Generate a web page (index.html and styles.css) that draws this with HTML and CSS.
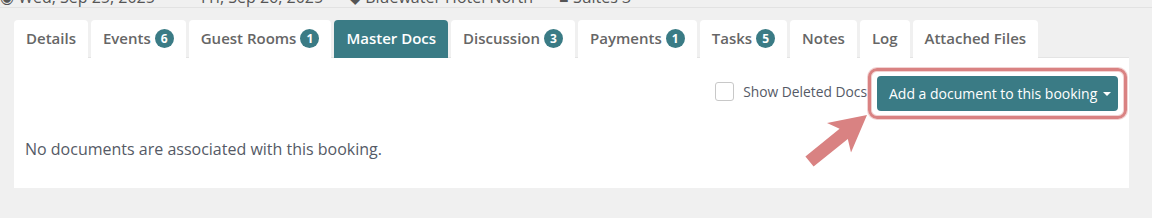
FILE: index.html
```html
<!DOCTYPE html>
<html lang="en">
<head>
<meta charset="utf-8">
<title>Booking – Master Docs</title>
<link rel="stylesheet" href="styles.css">
</head>
<body>
<div class="topbar">
  <div class="topbar-line">
    <span class="tb-item">&#9673; Wed, Sep 25, 2025</span>
    <span class="tb-item">&mdash; Fri, Sep 26, 2025</span>
    <span class="tb-item">&#9670; Bluewater Hotel North</span>
    <span class="tb-item">&#9632; Suites 3</span>
  </div>
</div>
<main class="main">
  <nav class="tabs">
    <a class="tab">Details</a>
    <a class="tab">Events <span class="badge">6</span></a>
    <a class="tab">Guest Rooms <span class="badge">1</span></a>
    <a class="tab active">Master Docs</a>
    <a class="tab">Discussion <span class="badge">3</span></a>
    <a class="tab">Payments <span class="badge">1</span></a>
    <a class="tab">Tasks <span class="badge">5</span></a>
    <a class="tab">Notes</a>
    <a class="tab">Log</a>
    <a class="tab">Attached Files</a>
  </nav>
  <section class="panel">
    <div class="toolbar">
      <label class="check-label"><span class="checkbox"></span>Show Deleted Docs</label>
      <div class="btn-wrap">
        <button class="btn">Add a document to this booking <span class="caret"></span></button>
      </div>
    </div>
    <p class="empty">No documents are associated with this booking.</p>
    <svg class="arrow" width="80" height="70" viewBox="800 110 80 70" aria-hidden="true">
      <polygon points="867,115 851,152.5 847.8,138.9 813.6,166.6 805.4,156.5 839.6,128.8 827,122.9" fill="#d98282"/>
    </svg>
  </section>
</main>
</body>
</html>
```

FILE: styles.css
```css
* { box-sizing: border-box; }
html, body { margin: 0; padding: 0; }
body {
  background: #f0f0f0;
  font-family: "Open Sans", "Liberation Sans", sans-serif;
  color: #555a66;
  width: 1152px;
  height: 218px;
  overflow: hidden;
}
.topbar {
  height: 8px;
  border-bottom: 1px solid #e2e2e2;
  overflow: hidden;
}
.topbar-line {
  display: flex;
  gap: 26px;
  margin-top: -13px;
  padding-left: 0;
  font-size: 16px;
  line-height: 20px;
  color: #555;
  white-space: nowrap;
}
.main {
  padding: 12px 23px 0 14px;
}
.tabs {
  display: flex;
  gap: 3px;
  height: 38px;
  border-bottom: 1px solid #e4e4e4;
}
.tab {
  display: flex;
  align-items: center;
  height: 38px;
  padding: 0 12px 2px;
  background: #fff;
  border-radius: 4px 4px 0 0;
  font-weight: 600;
  font-size: 15px;
  color: #666;
  white-space: nowrap;
}
.tab.active {
  background: #3a7b85;
  color: #fff;
}
.badge {
  display: inline-flex;
  align-items: center;
  justify-content: center;
  width: 19px;
  height: 19px;
  margin-left: 4px;
  border-radius: 50%;
  background: #3a7b85;
  color: #fff;
  font-size: 12px;
  font-weight: 700;
}
.panel {
  position: relative;
  background: #fff;
  height: 130px;
  padding: 18px 11px 0 11px;
}
.toolbar {
  display: flex;
  justify-content: flex-end;
  align-items: center;
}
.check-label {
  display: flex;
  align-items: center;
  font-size: 13.8px;
  line-height: 20px;
  color: #555a66;
  margin-right: 10px;
  margin-bottom: 4px;
}
.checkbox {
  width: 19px;
  height: 19px;
  border: 1px solid #c8c8c8;
  border-radius: 3px;
  margin-right: 9px;
  background: #fff;
}
.btn-wrap {
  position: relative;
}
.btn-wrap::after {
  content: "";
  position: absolute;
  top: -8px;
  bottom: -8px;
  left: -9px;
  right: -9px;
  border: 3px solid #d98282;
  border-radius: 9px;
  box-shadow: 0 0 0 1px rgba(217,130,130,0.35), inset 0 0 0 1px rgba(217,130,130,0.35);
  pointer-events: none;
}
.btn {
  display: flex;
  align-items: center;
  height: 35px;
  width: 241px;
  padding: 0 12px;
  border: 0;
  border-radius: 4px;
  background: #3a7b85;
  color: #fff;
  font-family: inherit;
  font-size: 14px;
  white-space: nowrap;
}
.caret {
  display: inline-block;
  margin-left: 6px;
  width: 0;
  height: 0;
  border-left: 4px solid transparent;
  border-right: 4px solid transparent;
  border-top: 4px solid #fff;
}
.empty {
  margin: 27px 0 0 0;
  font-size: 16px;
  line-height: 22px;
  color: #555a66;
}
.arrow {
  position: absolute;
  left: 786px;
  top: 52px;
}
```
